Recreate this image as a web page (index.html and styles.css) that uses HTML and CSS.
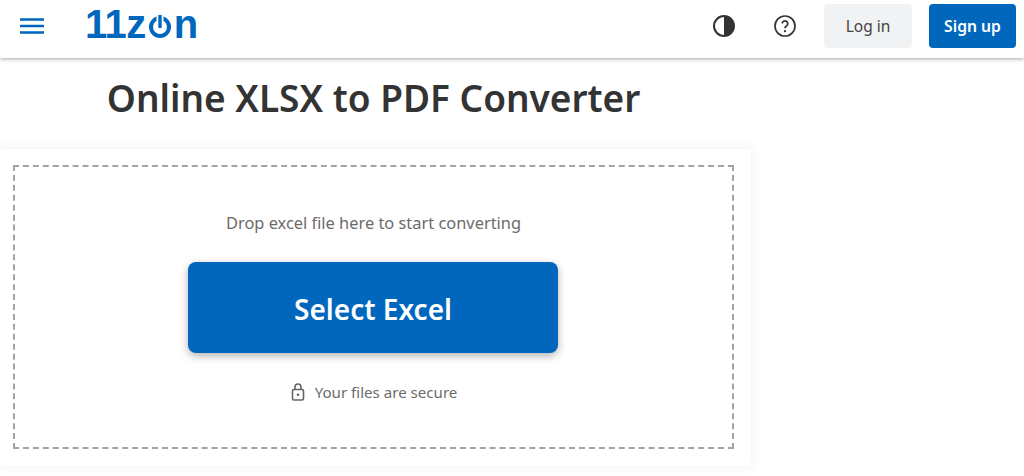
FILE: index.html
```html
<!DOCTYPE html>
<html lang="en">
<head>
    <meta charset="UTF-8">
    <meta name="viewport" content="width=device-width, initial-scale=1.0">
    <title>Online XLSX to PDF Converter</title>
    <link rel="stylesheet" href="styles.css">
</head>
<body>
    <header class="topo">
        <div class="topo-esq">
            <button class="menu" aria-label="Menu">
                <svg width="24" height="16" viewBox="0 0 24 16"><path d="M0 1.5h24M0 8h24M0 14.5h24" stroke="#0067bc" stroke-width="2.4" fill="none"/></svg>
            </button>
            <a class="logo" href="#">11z<svg class="logo-o" width="22" height="24" viewBox="0 0 22 24"><circle cx="11" cy="13" r="9" stroke="#0067bc" stroke-width="4" fill="none"/><path d="M11 0v15" stroke="#fff" stroke-width="7" fill="none"/><path d="M11 1v13" stroke="#0067bc" stroke-width="3.4" fill="none"/></svg>n</a>
        </div>
        <div class="topo-dir">
            <button class="icone" aria-label="Theme">
                <svg width="24" height="24" viewBox="0 0 24 24"><circle cx="12" cy="12" r="10" fill="#fff" stroke="#333" stroke-width="2"/><path d="M12 2a10 10 0 0 1 0 20z" fill="#333"/></svg>
            </button>
            <button class="icone" aria-label="Help">
                <svg width="24" height="24" viewBox="0 0 24 24"><circle cx="12" cy="12" r="10" fill="none" stroke="#333" stroke-width="1.7"/><path d="M9.2 9.6a2.8 2.8 0 1 1 4.3 2.4c-1 .6-1.5 1.1-1.5 2.2" fill="none" stroke="#333" stroke-width="1.7"/><circle cx="12" cy="17.2" r="1.1" fill="#333"/></svg>
            </button>
            <a class="botao entrar" href="#">Log in</a>
            <a class="botao registar" href="#">Sign up</a>
        </div>
    </header>
    <main class="conteudo">
        <h1>Online XLSX to PDF Converter</h1>
        <section class="cartao">
            <div class="area">
                <p class="dica">Drop excel file here to start converting</p>
                <button class="selecionar">Select Excel</button>
                <p class="seguro">
                    <svg width="16" height="20" viewBox="0 0 16 20"><rect x="2.5" y="7.5" width="11" height="10.5" rx="1.5" fill="none" stroke="#666" stroke-width="1.6"/><path d="M5 7.5V5a3 3 0 0 1 6 0v2.5" fill="none" stroke="#666" stroke-width="1.6"/><circle cx="8" cy="12.8" r="1.3" fill="#666"/></svg>
                    Your files are secure
                </p>
            </div>
        </section>
    </main>
</body>
</html>
```

FILE: styles.css
```css
* {
    margin: 0;
    padding: 0;
    box-sizing: border-box;
}
html, body {
    height: 100%;
    overflow: hidden;
}
body {
    font-family: "Noto Sans", Arial, sans-serif;
    background-color: #fff;
    color: #333;
}
.topo {
    height: 58px;
    display: flex;
    align-items: center;
    justify-content: space-between;
    padding: 0 8px 6px 20px;
    background-color: #fff;
    box-shadow: 0 1px 4px rgba(0, 0, 0, 0.35);
}
.topo-esq, .topo-dir {
    display: flex;
    align-items: center;
}
.menu, .icone {
    background: none;
    border: 0;
    display: flex;
}
.logo {
    display: flex;
    align-items: flex-end;
    margin-left: 41px;
    margin-bottom: 4px;
    font-family: "Liberation Sans", Arial, sans-serif;
    font-size: 40px;
    font-weight: 700;
    line-height: 1;
    letter-spacing: -0.5px;
    color: #0067bc;
    text-decoration: none;
}
.logo-o {
    margin: 0 3px 6px 3px;
}
.icone {
    margin-right: 37px;
}
.icone + .icone {
    margin-right: 27px;
}
.botao {
    height: 44px;
    display: flex;
    align-items: center;
    justify-content: center;
    border-radius: 4px;
    text-decoration: none;
}
.entrar {
    width: 88px;
    margin-right: 17px;
    background-color: #f1f2f4;
    color: #444;
    font-size: 15.5px;
}
.registar {
    width: 87px;
    background-color: #0067bc;
    color: #fff;
    font-size: 15.7px;
    font-weight: 600;
}
.conteudo {
    width: 751px;
}
h1 {
    height: 91px;
    padding: 14px 4px 0 0;
    text-align: center;
    font-size: 37px;
    font-weight: 600;
    line-height: 52px;
    color: #333;
}
.cartao {
    height: 317px;
    padding: 16px 17px 17px 13px;
    background-color: #fff;
    box-shadow: 0 0 12px rgba(40, 50, 110, 0.08);
}
.area {
    height: 284px;
    display: flex;
    flex-direction: column;
    align-items: center;
    border: 2px dashed #a3a3a3;
}
.dica {
    margin-top: 44px;
    font-size: 16.4px;
    line-height: 24px;
    color: #6b6b6b;
}
.selecionar {
    width: 370px;
    height: 91px;
    margin: 27px 1px 0 0;
    padding-top: 2px;
    border: 0;
    border-radius: 8px;
    background-color: #0067bc;
    color: #fff;
    font-family: inherit;
    font-size: 28px;
    font-weight: 600;
    box-shadow: 0 3px 8px rgba(0, 0, 0, 0.3);
}
.seguro {
    display: flex;
    align-items: center;
    gap: 9px;
    margin-top: 27px;
    font-size: 15.1px;
    line-height: 24px;
    color: #6b6b6b;
}
```
